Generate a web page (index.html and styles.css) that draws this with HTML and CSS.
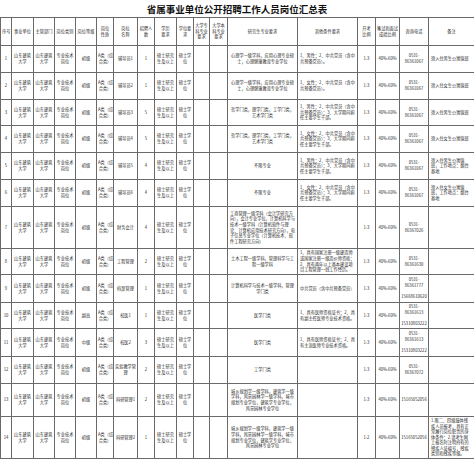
FILE: index.html
```html
<!DOCTYPE html>
<html lang="zh-CN">
<head>
<meta charset="utf-8">
<title>省属事业单位公开招聘工作人员岗位汇总表</title>
<link rel="stylesheet" href="styles.css">
</head>
<body>
<div class="title">省属事业单位公开招聘工作人员岗位汇总表</div>
<table class="grid">
<colgroup>
<col class="c1"><col class="c2"><col class="c3"><col class="c4"><col class="c5"><col class="c6"><col class="c7"><col class="c8"><col class="c9"><col class="c10"><col class="c11"><col class="c12"><col class="c13"><col class="c14"><col class="c15"><col class="c16"><col class="c17"><col class="c18">
</colgroup>
<thead>
<tr class="h-head">
<th>序号</th><th>事业单位</th><th>主管部门</th><th>岗位类别</th><th>岗位等级</th><th>岗位<br>性质</th><th>岗位<br>名称</th><th>招聘人<br>数</th><th>学历<br>要求</th><th>学位要<br>求</th><th>大学专<br>科专业<br>要求</th><th>大学本<br>科专业<br>要求</th><th>研究生专业要求</th><th>其他条件要求</th><th>开考<br>比例</th><th>笔试和面试<br>成绩比例</th><th>咨询电话</th><th>备注</th>
</tr>
</thead>
<tbody>
<tr class="h27">
<td>1</td><td>山东建筑<br>大学</td><td>山东建筑<br>大学</td><td>专业技术<br>岗位</td><td>初级</td><td>A类（综<br>合类）</td><td>辅导员1</td><td>1</td><td>硕士研究<br>生及以上</td><td>硕士学<br>位</td><td></td><td></td>
<td class="wrap">心理学一级学科，应用心理专业硕士，心理健康教育专业学位</td>
<td class="wrap left">1、男性；2、中共党员（含中共预备党员）。</td>
<td>1:3</td><td>40%:60%</td><td>0531-<br>86361067</td><td class="wrap left">须入住男生公寓值班</td>
</tr>
<tr class="h27">
<td>2</td><td>山东建筑<br>大学</td><td>山东建筑<br>大学</td><td>专业技术<br>岗位</td><td>初级</td><td>A类（综<br>合类）</td><td>辅导员2</td><td>1</td><td>硕士研究<br>生及以上</td><td>硕士学<br>位</td><td></td><td></td>
<td class="wrap">心理学一级学科，应用心理专业硕士，心理健康教育专业学位</td>
<td class="wrap left">1、女性；2、中共党员（含中共预备党员）。</td>
<td>1:3</td><td>40%:60%</td><td>0531-<br>86361067</td><td class="wrap left">须入住女生公寓值班</td>
</tr>
<tr class="h26">
<td>3</td><td>山东建筑<br>大学</td><td>山东建筑<br>大学</td><td>专业技术<br>岗位</td><td>初级</td><td>A类（综<br>合类）</td><td>辅导员3</td><td>5</td><td>硕士研究<br>生及以上</td><td>硕士学<br>位</td><td></td><td></td>
<td class="wrap">哲学门类，理学门类，工学门类，艺术学门类</td>
<td class="wrap left">1、男性；2、中共党员（含中共预备党员）；3、大学期间担任主要学生干部。</td>
<td>1:3</td><td>40%:60%</td><td>0531-<br>86361067</td><td class="wrap left">须入住男生公寓值班</td>
</tr>
<tr class="h27">
<td>4</td><td>山东建筑<br>大学</td><td>山东建筑<br>大学</td><td>专业技术<br>岗位</td><td>初级</td><td>A类（综<br>合类）</td><td>辅导员4</td><td>5</td><td>硕士研究<br>生及以上</td><td>硕士学<br>位</td><td></td><td></td>
<td class="wrap">哲学门类，理学门类，工学门类，艺术学门类</td>
<td class="wrap left">1、女性；2、中共党员（含中共预备党员）；3、大学期间担任主要学生干部。</td>
<td>1:3</td><td>40%:60%</td><td>0531-<br>86361067</td><td class="wrap left">须入住女生公寓值班</td>
</tr>
<tr class="h27">
<td>5</td><td>山东建筑<br>大学</td><td>山东建筑<br>大学</td><td>专业技术<br>岗位</td><td>初级</td><td>A类（综<br>合类）</td><td>辅导员5</td><td>4</td><td>硕士研究<br>生及以上</td><td>硕士学<br>位</td><td></td><td></td>
<td class="wrap">不限专业</td>
<td class="wrap left">1、男性；2、中共党员（含中共预备党员）；3、大学期间担任主要学生干部。</td>
<td>1:3</td><td>40%:60%</td><td>0531-<br>86361067</td><td class="wrap left">须入住男生公寓值班，工作地点：烟台基地</td>
</tr>
<tr class="h27">
<td>6</td><td>山东建筑<br>大学</td><td>山东建筑<br>大学</td><td>专业技术<br>岗位</td><td>初级</td><td>A类（综<br>合类）</td><td>辅导员6</td><td>4</td><td>硕士研究<br>生及以上</td><td>硕士学<br>位</td><td></td><td></td>
<td class="wrap">不限专业</td>
<td class="wrap left">1、女性；2、中共党员（含中共预备党员）；3、大学期间担任主要学生干部。</td>
<td>1:3</td><td>40%:60%</td><td>0531-<br>86361067</td><td class="wrap left">须入住女生公寓值班，工作地点：烟台基地</td>
</tr>
<tr class="h42">
<td>7</td><td>山东建筑<br>大学</td><td>山东建筑<br>大学</td><td>专业技术<br>岗位</td><td>初级</td><td>A类（综<br>合类）</td><td>财务会计</td><td>4</td><td>硕士研究<br>生及以上</td><td>硕士学<br>位</td><td></td><td></td>
<td class="wrap left">工商管理一级学科（会计学研究方向），会计专业学位，计算机科学与技术一级学科（计算机软件与理论、计算机应用技术研究方向），电子信息专业学位（计算机技术、软件工程研究方向）</td>
<td></td>
<td>1:3</td><td>40%:60%</td><td>0531-<br>86367026</td><td></td>
</tr>
<tr class="h26">
<td>8</td><td>山东建筑<br>大学</td><td>山东建筑<br>大学</td><td>专业技术<br>岗位</td><td>初级</td><td>A类（综<br>合类）</td><td>工程管理</td><td>2</td><td>硕士研究<br>生及以上</td><td>硕士学<br>位</td><td></td><td></td>
<td class="wrap">土木工程一级学科，管理科学与工程一级学科</td>
<td class="wrap left">1、具有国家注册一级建造师或国家注册一级造价师资格；2、具有两年以上基本建设项目工程管理一线工作经历。</td>
<td>1:3</td><td>40%:60%</td><td>0531-<br>86361630</td><td></td>
</tr>
<tr class="h28">
<td>9</td><td>山东建筑<br>大学</td><td>山东建筑<br>大学</td><td>专业技术<br>岗位</td><td>初级</td><td>A类（综<br>合类）</td><td>档案管理</td><td>1</td><td>硕士研究<br>生及以上</td><td>硕士学<br>位</td><td></td><td></td>
<td class="wrap">计算机科学与技术一级学科，管理学门类</td>
<td class="wrap left">中共党员（含中共预备党员）</td>
<td>1:3</td><td>40%:60%</td><td>0531-<br>86361777<span class="gap"></span>15668610620</td><td></td>
</tr>
<tr class="h26">
<td>10</td><td>山东建筑<br>大学</td><td>山东建筑<br>大学</td><td>专业技术<br>岗位</td><td>副高</td><td>A类（综<br>合类）</td><td>校医1</td><td>1</td><td>硕士研究<br>生及以上</td><td>硕士学<br>位</td><td></td><td></td>
<td class="wrap">医学门类</td>
<td class="wrap left">1、具有医师资格证书；2、具有副主任医师专业技术资格。</td>
<td>1:3</td><td>40%:60%</td><td>0531-<br>86361613<span class="gap"></span>15310803222</td><td></td>
</tr>
<tr class="h28">
<td>11</td><td>山东建筑<br>大学</td><td>山东建筑<br>大学</td><td>专业技术<br>岗位</td><td>中级</td><td>A类（综<br>合类）</td><td>校医2</td><td>3</td><td>硕士研究<br>生及以上</td><td>硕士学<br>位</td><td></td><td></td>
<td class="wrap">医学门类</td>
<td class="wrap left">1、具有医师资格证书；2、具有主治医师专业技术资格。</td>
<td>1:3</td><td>40%:60%</td><td>0531-<br>86361613<span class="gap"></span>15310803222</td><td></td>
</tr>
<tr class="h27">
<td>12</td><td>山东建筑<br>大学</td><td>山东建筑<br>大学</td><td>专业技术<br>岗位</td><td>初级</td><td>A类（综<br>合类）</td><td>实验教学管<br>理</td><td>2</td><td>硕士研究<br>生及以上</td><td>硕士学<br>位</td><td></td><td></td>
<td class="wrap">工学门类</td>
<td></td>
<td>1:3</td><td>40%:60%</td><td>0531-<br>86367072</td><td></td>
</tr>
<tr class="h33">
<td>13</td><td>山东建筑<br>大学</td><td>山东建筑<br>大学</td><td>专业技术<br>岗位</td><td>初级</td><td>A类（综<br>合类）</td><td>科研管理1</td><td>2</td><td>硕士研究<br>生及以上</td><td>硕士学<br>位</td><td></td><td></td>
<td class="wrap">城乡规划学一级学科，建筑学一级学科，风景园林学一级学科，城市规划专业学位，建筑学专业学位，风景园林专业学位</td>
<td></td>
<td>1:3</td><td>40%:60%</td><td>15165052056</td><td></td>
</tr>
<tr class="h42">
<td>14</td><td>山东建筑<br>大学</td><td>山东建筑<br>大学</td><td>专业技术<br>岗位</td><td>初级</td><td>A类（综<br>合类）</td><td>科研管理2</td><td>1</td><td>硕士研究<br>生及以上</td><td>硕士学<br>位</td><td></td><td></td>
<td class="wrap">城乡规划学一级学科，建筑学一级学科，风景园林学一级学科，城市规划专业学位，建筑学专业学位，风景园林专业学位</td>
<td></td>
<td>1:2</td><td>40%:60%</td><td>15165052056</td><td class="wrap left">1.限二、四级肢体残疾人员报考，具有正常履行岗位职责的身体条件；2.请考生网上报名时注明持有的残疾人证编号，残疾类别和残疾等级。</td>
</tr>
</tbody>
</table>
</body>
</html>
```

FILE: styles.css
```css
html, body {
  margin: 0;
  padding: 0;
  background: #ffffff;
}

body {
  font-family: "Noto Sans CJK SC", "Liberation Sans", sans-serif;
  color: #2a2a2a;
  width: 474px;
  overflow: hidden;
}

.title {
  height: 17px;
  display: flex;
  align-items: center;
  justify-content: center;
  font-size: 9.5px;
  font-weight: 700;
  color: #111111;
}

.grid {
  border-collapse: collapse;
  table-layout: fixed;
  width: 474px;
  font-size: 4.2px;
  line-height: 5.6px;
}

.grid th,
.grid td {
  border: 1px solid #6a6a6a;
  padding: 0 1px;
  text-align: center;
  vertical-align: middle;
  font-weight: normal;
  overflow: hidden;
  white-space: nowrap;
}

.grid td.wrap {
  white-space: normal;
  padding: 0 2px;
}

.grid td.left {
  text-align: left;
}

.gap {
  display: block;
  height: 6px;
}

.c1 { width: 11px; }
.c2 { width: 22px; }
.c3 { width: 21px; }
.c4 { width: 21px; }
.c5 { width: 21px; }
.c6 { width: 17px; }
.c7 { width: 24px; }
.c8 { width: 17px; }
.c9 { width: 22px; }
.c10 { width: 17px; }
.c11 { width: 16px; }
.c12 { width: 18px; }
.c13 { width: 70px; }
.c14 { width: 60px; }
.c15 { width: 18px; }
.c16 { width: 24px; }
.c17 { width: 29px; }
.c18 { width: 46px; }

.h-head { height: 28px; }
.h26 { height: 26px; }
.h27 { height: 27px; }
.h28 { height: 28px; }
.h33 { height: 33px; }
.h42 { height: 42px; }
```
